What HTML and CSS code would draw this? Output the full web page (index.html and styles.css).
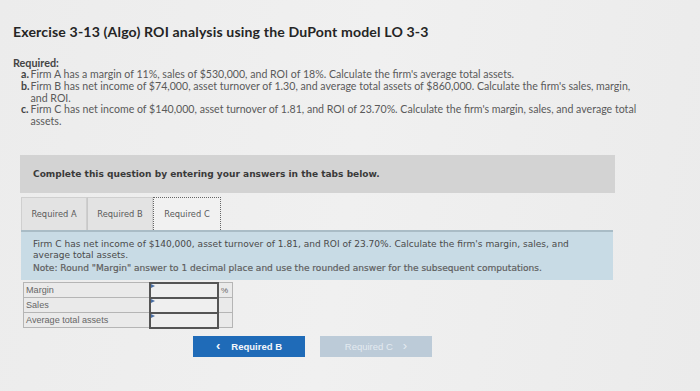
FILE: index.html
```html
<!DOCTYPE html>
<html>
<head>
<meta charset="utf-8">
<link rel="stylesheet" href="styles.css">
</head>
<body>
<div class="page">
  <h1 class="title">Exercise 3-13 (Algo) ROI analysis using the DuPont model LO 3-3</h1>
  <div class="req-label">Required:</div>
  <ol class="req-list">
    <li><span class="mk">a.</span><span>Firm A has a margin of 11%, sales of $530,000, and ROI of 18%. Calculate the firm's average total assets.</span></li>
    <li><span class="mk">b.</span><span>Firm B has net income of $74,000, asset turnover of 1.30, and average total assets of $860,000. Calculate the firm's sales, margin,<br>and ROI.</span></li>
    <li><span class="mk">c.</span><span>Firm C has net income of $140,000, asset turnover of 1.81, and ROI of 23.70%. Calculate the firm's margin, sales, and average total assets.</span></li>
  </ol>
  <div class="question">
    <div class="banner">Complete this question by entering your answers in the tabs below.</div>
    <div class="tabs">
      <div class="tab">Required A</div>
      <div class="tab">Required B</div>
      <div class="tab active">Required C</div>
    </div>
    <div class="panel">
      <p>Firm C has net income of $140,000, asset turnover of 1.81, and ROI of 23.70%. Calculate the firm's margin, sales, and average total assets.</p>
      <p class="note">Note: Round "Margin" answer to 1 decimal place and use the rounded answer for the subsequent computations.</p>
    </div>
    <table class="answers">
      <tr><td class="lbl">Margin</td><td class="inp"><span class="flag"></span></td><td class="unit">%</td></tr>
      <tr><td class="lbl">Sales</td><td class="inp"><span class="flag"></span></td><td class="unit"></td></tr>
      <tr><td class="lbl">Average total assets</td><td class="inp"><span class="flag"></span></td><td class="unit"></td></tr>
    </table>
    <div class="nav">
      <div class="btn prev"><span class="chev">&#8249;</span>Required B</div>
      <div class="btn next disabled">Required C<span class="chev">&#8250;</span></div>
    </div>
  </div>
</div>
</body>
</html>
```
FILE: styles.css
```css
html, body {
  margin: 0;
  padding: 0;
}
body {
  width: 700px;
  height: 391px;
  overflow: hidden;
  background: linear-gradient(100deg, #ececec 0%, #f0f0f0 50%, #ebebeb 100%);
  font-family: "Lato", "Liberation Sans", sans-serif;
  color: #333;
}
.page {
  padding: 24px 0 0 13px;
}
.title {
  margin: 0;
  font-family: "Lato", sans-serif;
  font-weight: 700;
  font-size: 14.1px;
  line-height: 16px;
  color: #252525;
  letter-spacing: 0.15px;
}
.req-label {
  margin-top: 17px;
  font-family: "Lato", sans-serif;
  font-weight: 700;
  font-size: 10.8px;
  line-height: 12px;
  color: #444;
}
.req-list {
  list-style: none;
  margin: 0;
  padding: 0 0 0 8px;
  font-family: "Lato", sans-serif;
  font-size: 10.6px;
  line-height: 11.8px;
  color: #5a5a5a;
  width: 628px;
}
.req-list li {
  display: flex;
}
.req-list .mk {
  width: 9.5px;
  flex: none;
  font-weight: 700;
  color: #444;
}
.question {
  margin-left: 7px;
  margin-top: 27px;
  font-family: "DejaVu Sans", Verdana, sans-serif;
}
.banner {
  width: 595px;
  height: 38px;
  box-sizing: border-box;
  padding: 0 0 0 13px;
  display: flex;
  align-items: center;
  background: #d3d3d3;
  font-weight: 700;
  font-size: 9.05px;
  color: #3a3a3a;
}
.tabs {
  display: flex;
  margin-top: 4px;
  margin-left: 1px;
  height: 33px;
}
.tab {
  width: 66px;
  box-sizing: border-box;
  display: flex;
  align-items: center;
  justify-content: center;
  background: #e3e3e3;
  border: 1px solid #cfcfcf;
  border-bottom: none;
  font-size: 8.3px;
  color: #5a5a5a;
}
.tab + .tab {
  border-left: 1px solid #c8c8c8;
}
.tab.active {
  width: 68px;
  background: #f1f1f1;
  border: 1px dotted #666;
  border-bottom: none;
}
.panel {
  margin-left: 1px;
  width: 592px;
  height: 50px;
  box-sizing: border-box;
  padding: 7px 10px 0 12px;
  background: #c8dbe5;
  border-top: 2px solid #a9bcc6;
  font-size: 9.05px;
  line-height: 11.3px;
  color: #4a4a4a;
}
.panel p {
  margin: 0;
}
.panel .note {
  margin-top: 1px;
  color: #606060;
  -webkit-text-stroke: 0.2px #606060;
}
.answers {
  margin-top: 2px;
  margin-left: 3px;
  border-collapse: collapse;
  font-family: "Liberation Sans", Arial, sans-serif;
  font-size: 9.1px;
  color: #666;
}
.answers td {
  height: 13px;
  padding: 0 0 0 2px;
  border: 1px solid #b5b5b5;
  background: #eaeaea;
}
.answers .lbl {
  width: 123px;
}
.answers .inp {
  width: 66px;
  position: relative;
  border: 2px solid #555;
  background: #efefef;
  padding: 0;
}
.answers .unit {
  width: 11px;
  font-size: 8px;
}
.flag {
  position: absolute;
  left: 0;
  top: 0;
  width: 0;
  height: 0;
  border-top: 2px solid transparent;
  border-bottom: 2px solid transparent;
  border-left: 4px solid #4a6fa5;
}
.nav {
  display: flex;
  gap: 15px;
  margin-top: 7px;
  margin-left: 173px;
}
.btn {
  width: 112px;
  height: 21px;
  display: flex;
  align-items: center;
  justify-content: center;
  font-family: "Liberation Sans", Arial, sans-serif;
  font-weight: 700;
  font-size: 9.5px;
}
.btn.prev {
  background: #1f6bb8;
  color: #f4f7fb;
}
.btn.prev .chev {
  font-size: 13px;
  margin-right: 11px;
  margin-top: -2px;
}
.btn.next {
  background: #bccbd8;
  color: #e3eaf0;
  font-weight: 400;
}
.btn.next .chev {
  font-size: 13px;
  margin-left: 10px;
  margin-top: -2px;
}
```
